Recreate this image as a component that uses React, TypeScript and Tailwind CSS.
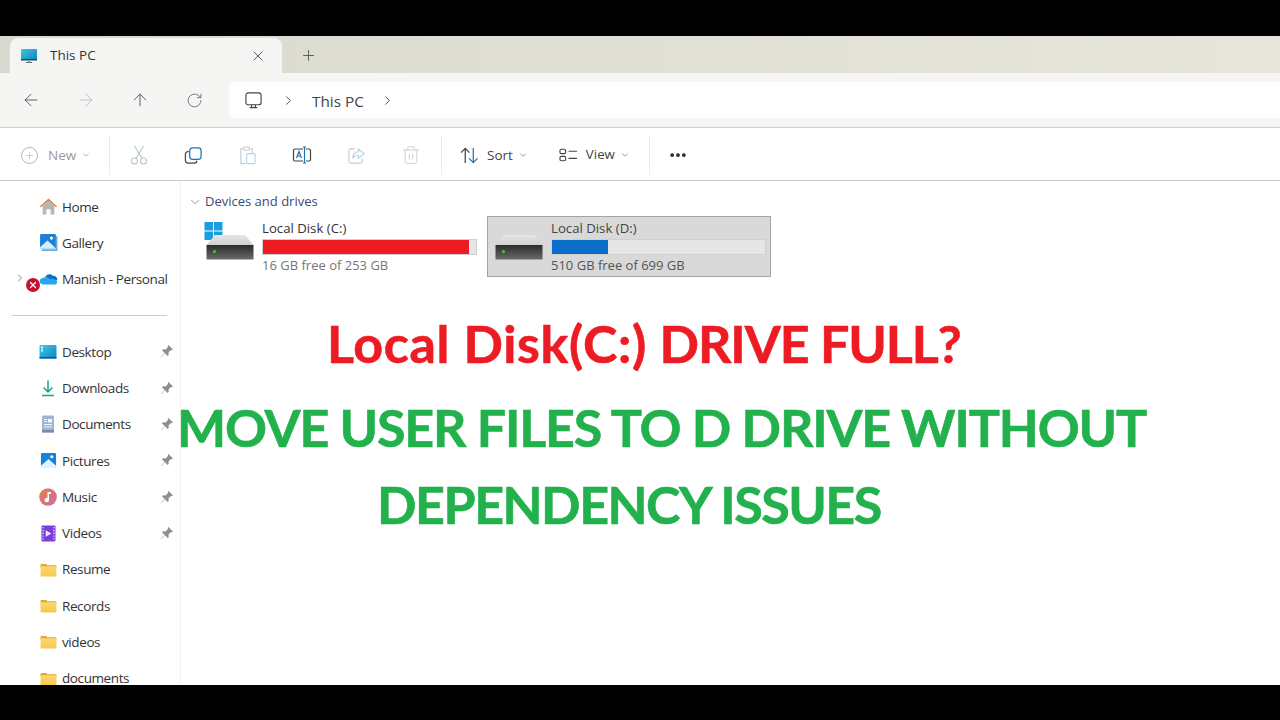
import React from "react";
import { ArrowLeft, ArrowRight, ArrowUp, RotateCw, ChevronRight, ChevronDown, Plus, X, Trash2, Ellipsis } from "lucide-react";

const Monitor = ({ className = "" }: { className?: string }) => (
  <svg viewBox="0 0 20 20" className={className} fill="none" stroke="#444" strokeWidth="1.2">
    <rect x="2" y="2" width="16" height="12.5" rx="2.5" />
    <path d="M6 17.5h8M8 14.5v3M12 14.5v3" />
  </svg>
);

const ThisPc = () => (
  <svg viewBox="0 0 18 18" className="w-[18px] h-[18px]">
    <defs>
      <linearGradient id="pc" x1="0" y1="0" x2="1" y2="1"><stop offset="0" stopColor="#3dc6e6" /><stop offset="1" stopColor="#0e86b8" /></linearGradient>
    </defs>
    <rect x="1" y="2" width="16" height="11" rx="1" fill="url(#pc)" />
    <rect x="1" y="12" width="16" height="1.5" fill="#1c4a5e" />
    <path d="M6 16h6v-1H6z" fill="#5b6b73" />
    <rect x="8" y="13.5" width="2" height="2" fill="#8b9aa2" />
  </svg>
);

const HomeIcon = () => (
  <svg viewBox="0 0 18 18" className="w-[19px] h-[19px]">
    <path d="M3.5 8.5 9 3.5l5.5 5V16.500h-3.500v-5h-4v5H3.500z" fill="#b6b6b6" />
    <path d="M0.800 9 9 1.500 17.200 9l-1 .8L9 3.500 1.800 9.800z" fill="#d9813a" />
  </svg>
);

const GalleryIcon = () => (
  <svg viewBox="0 0 18 18" className="w-[19px] h-[19px]">
    <rect x="1" y="1" width="15" height="14" rx="1.200" fill="#1d7fd6" />
    <path d="M2.500 17h15V3h-1.500v12.500H2.500z" fill="#6aa9dc" />
    <path d="M1 13.500 8 7l7 6.500V15H1z" fill="#d7ecfb" />
    <circle cx="11.800" cy="4.800" r="1.500" fill="#fff" />
  </svg>
);

const Cloud = () => (
  <svg viewBox="0 0 20 14" className="w-[19px] h-[13px]">
    <path d="M7 3.500C8.500 1 12.500.5 14.500 3c3-.500 5 1.800 5 4.500H6z" fill="#0b6fc9" />
    <path d="M4.500 12.500C2 12.500.5 10.800.5 9 .5 7 2 5.500 4.300 5.500 6 3.800 9.500 4 11 6.500c2-.800 5-.500 8 1.500 1 2-.500 4.500-2.500 4.500z" fill="#28a8ea" />
  </svg>
);

const DesktopIcon = () => (
  <svg viewBox="0 0 18 16" className="w-[18px] h-[16px]">
    <defs><linearGradient id="dk" x1="0" y1="0" x2="1" y2="1"><stop offset="0" stopColor="#43c8e8" /><stop offset="1" stopColor="#0b86c0" /></linearGradient></defs>
    <rect x="0.500" y="1" width="17" height="13.500" rx="1" fill="url(#dk)" />
    <rect x="2" y="2.500" width="2" height="2" fill="#d5f3fb" />
    <rect x="2" y="5.500" width="2" height="2" fill="#d5f3fb" />
    <rect x="0.500" y="13" width="17" height="1.500" fill="#0a5c85" />
  </svg>
);

const DownloadIcon = () => (
  <svg viewBox="0 0 18 18" className="w-[18px] h-[18px]" fill="none" stroke="#1aa58a" strokeWidth="1.500">
    <path d="M9 1.500v11M4.500 8.500 9 13l4.500-4.500M3 16.500h12" />
  </svg>
);

const DocIcon = () => (
  <svg viewBox="0 0 18 18" className="w-[18px] h-[18px]">
    <rect x="3" y="0.500" width="12" height="17" rx="1" fill="#9fb3d2" />
    <rect x="3" y="15" width="12" height="2.500" fill="#6f8ab3" />
    <path d="M9 4h4v3.500H9zM5 9h8v1H5zM5 11.500h8v1H5zM5 4h3v1H5zM5 6h3v1H5z" fill="#f3f6fa" />
  </svg>
);

const PicturesIcon = () => (
  <svg viewBox="0 0 18 18" className="w-[17px] h-[17px]">
    <rect x="1" y="1" width="16" height="16" rx="1.200" fill="#1583dd" />
    <path d="M1 14.500 9 7.500l8 7V16.500a.8.800 0 0 1-.8.500H1.800a.8.800 0 0 1-.8-.500z" fill="#e4f2fc" />
    <circle cx="12.500" cy="5" r="1.600" fill="#fff" />
  </svg>
);

const MusicIcon = () => (
  <svg viewBox="0 0 18 18" className="w-[18px] h-[18px]">
    <defs><linearGradient id="mu" x1="0" y1="0" x2="1" y2="1"><stop offset="0" stopColor="#ea7d3e" /><stop offset="1" stopColor="#c76bb0" /></linearGradient></defs>
    <circle cx="9" cy="9" r="8.800" fill="url(#mu)" />
    <path d="M8.500 4h3.500v2H10v6a2.200 2.200 0 1 1-1.500-2.100z" fill="#fff" />
  </svg>
);

const VideoIcon = () => (
  <svg viewBox="0 0 16 18" className="w-[15px] h-[17px]">
    <rect x="0.500" y="0.500" width="15" height="17" rx="1.200" fill="#7a3fd6" />
    <path d="M5 5.500v7l6-3.500z" fill="#f0e6ff" />
    <path d="M1.500 2h1.500v1.500H1.500zM1.500 5h1.500v1.500H1.500zM1.500 8h1.500v1.500H1.500zM1.500 11h1.500v1.500H1.500zM1.500 14h1.500v1.500H1.500zM13 2h1.500v1.500H13zM13 5h1.500v1.500H13zM13 8h1.500v1.500H13zM13 11h1.500v1.500H13zM13 14h1.500v1.500H13z" fill="#d8c4fa" />
  </svg>
);

const FolderIcon = () => (
  <svg viewBox="0 0 18 15" className="w-[17px] h-[14px]">
    <defs><linearGradient id="fo" x1="0" y1="0" x2="0" y2="1"><stop offset="0" stopColor="#fbd774" /><stop offset="1" stopColor="#f7c948" /></linearGradient></defs>
    <path d="M0.500 2a1 1 0 0 1 1-1h5l1.500 1.500h8.500a1 1 0 0 1 1 1V5H.500z" fill="#e3a92c" />
    <rect x="0.500" y="3.500" width="17" height="11" rx="0.800" fill="url(#fo)" />
  </svg>
);

const Pin = () => (
  <svg viewBox="0 0 14 14" className="w-[14px] h-[14px] -mt-[1px] mr-[1px]">
    <path d="M8.500 1 13 5.500l-1 .8-1-.3-2.500 2.500.2 2.500-1 1L5 9.300 1.300 13 1 12.700 4.700 9 2 6.300l1-1 2.500.2L8 3l-.3-1z" fill="#8b9094" />
  </svg>
);

const Drive = ({ win = false }: { win?: boolean }) => (
  <div className="relative w-[48px] h-[39px] mb-[12px] shrink-0">
    {win && (
      <svg viewBox="0 0 20 20" className="absolute left-[-2px] top-[1px] w-[19px] h-[18px]">
        <path d="M0 0h9.500v9.500H0zM10.500 0H20v9.500h-9.500zM0 10.500h9.500V20H0zM10.500 10.500H20V20h-9.500z" fill="#1b9de2" />
      </svg>
    )}
    <svg viewBox="0 0 48 25" className="absolute left-0 bottom-0 w-[48px] h-[25px]">
      <defs>
        <linearGradient id="dr" x1="0" y1="0" x2="0" y2="1"><stop offset="0" stopColor="#2b2b2b" /><stop offset="1" stopColor="#6b6b6b" /></linearGradient>
        <linearGradient id="dt" x1="0" y1="0" x2="0" y2="1"><stop offset="0" stopColor="#e6e6e6" /><stop offset="1" stopColor="#cfcfcf" /></linearGradient>
      </defs>
      <path d="M0.500 10 9 0h30l8.500 10z" fill="url(#dt)" />
      <rect x="0.500" y="10" width="47" height="14.500" fill="url(#dr)" />
      <circle cx="8.500" cy="16.500" r="1.500" fill="#35d04a" />
    </svg>
  </div>
);

const ToolIcon = ({ children }: { children: React.ReactNode }) => (
  <div className="w-[54.400px] flex justify-center items-center">{children}</div>
);

const NavRow = ({ icon, label, pin }: { icon: React.ReactNode; label: string; pin?: boolean }) => (
  <div className="h-[36.3px] shrink-0 flex items-center pl-[38px] pr-[5px]">
    <div className="w-[20px] flex justify-center">{icon}</div>
    <span className="ml-[4px] text-[13.500px] tracking-[-0.400px] text-[#333] flex-1 whitespace-nowrap">{label}</span>
    {pin && <Pin />}
  </div>
);

const DriveTile = ({ win, name, free, pct, color, selected }: { win?: boolean; name: string; free: string; pct: number; color: string; selected?: boolean }) => (
  <div className={`w-[284px] h-[61px] flex items-center border ${selected ? "pl-[7px] bg-[#d9d9d9] border-[#a3a3a3]" : "pl-[9px] border-transparent"}`}>
    <Drive win={win} />
    <div className="ml-[8px] w-[215px] flex flex-col">
      <span className={`text-[13.200px] leading-[19px] ${selected ? "text-[#444]" : "text-[#333]"}`}>{name}</span>
      <div className="h-[16px] bg-[#e6e6e6] border border-[#d0d0d0] my-[1px]">
        <div className="h-full" style={{ width: `${pct}%`, backgroundColor: color }} />
      </div>
      <span className={`text-[13px] leading-[19px] ${selected ? "text-[#555]" : "text-[#777]"}`}>{free}</span>
    </div>
  </div>
);

export default function App() {
  return (
    <div className="w-[1280px] h-[720px] overflow-hidden bg-black flex flex-col font-['Open_Sans','Noto_Sans',sans-serif]">
      <div className="h-[36px] shrink-0" />
      <div className="h-[649px] flex flex-col bg-white overflow-hidden">
        {/* Tab strip */}
        <div className="h-[37px] shrink-0 flex items-end pl-[10px] bg-gradient-to-r from-[#d9d9cf] to-[#e8e6da]">
          <div className="w-[272px] h-[35px] rounded-t-[8px] bg-[#f5f6f4] flex items-center pl-[10px]">
            <ThisPc />
            <span className="ml-[12px] text-[13.500px] text-[#333]">This PC</span>
            <X className="w-[16px] h-[16px] text-[#444] ml-auto mr-[16px]" strokeWidth={1.300} />
          </div>
          <div className="h-[35px] flex items-center ml-[18px]">
            <Plus className="w-[17px] h-[17px] text-[#555]" strokeWidth={1.300} />
          </div>
        </div>
        {/* Address row */}
        <div className="h-[55px] shrink-0 flex items-center bg-[#f5f6f4] border-b border-[#cfcfcf]">
          <div className="flex items-center pl-[3px]">
            <div className="w-[55px] flex justify-center"><ArrowLeft className="w-[20px] h-[20px] text-[#555]" strokeWidth={1.100} /></div>
            <div className="w-[55px] flex justify-center"><ArrowRight className="w-[20px] h-[20px] text-[#bbb]" strokeWidth={1.100} /></div>
            <div className="w-[54px] flex justify-center"><ArrowUp className="w-[20px] h-[20px] text-[#555]" strokeWidth={1.100} /></div>
            <div className="w-[55px] flex justify-center"><RotateCw className="w-[17px] h-[17px] text-[#666]" strokeWidth={1.200} /></div>
          </div>
          <div className="ml-[7px] flex-1 h-[36px] bg-white rounded-l-[6px] flex items-center pl-[15px]">
            <Monitor className="w-[19px] h-[19px]" />
            <ChevronRight className="w-[15px] h-[15px] text-[#444] ml-[18px]" strokeWidth={1.500} />
            <span className="ml-[16px] text-[15.300px] text-[#444] pt-[2px]">This PC</span>
            <ChevronRight className="w-[15px] h-[15px] text-[#444] ml-[16px]" strokeWidth={1.500} />
          </div>
        </div>
        {/* Command bar */}
        <div className="h-[53px] shrink-0 flex items-center border-b border-[#c8c8c8] pt-[2px]">
          <div className="w-[110px] h-[40px] border-r border-[#ececec] flex items-center pl-[21px] text-[#aaa]">
            <div className="w-[17px] h-[17px] rounded-full border border-[#b5b5b5] flex items-center justify-center"><Plus className="w-[11px] h-[11px]" strokeWidth={1.200} /></div>
            <span className="ml-[10px] text-[13.500px] text-[#999]">New</span>
            <ChevronDown className="w-[10px] h-[10px] ml-[5px]" />
          </div>
          <div className="w-[332px] h-[40px] border-r border-[#ececec] flex items-center pl-[2px]">
            <ToolIcon>
              <svg viewBox="0 0 18 20" className="w-[18px] h-[20px]" fill="none" stroke="#b9c5cc" strokeWidth="1.100">
                <circle cx="4.500" cy="16" r="3" />
                <circle cx="13.500" cy="16" r="3" />
                <path d="M5.800 13.500 13.500 1M12.200 13.500 4.500 1" />
              </svg>
            </ToolIcon>
            <ToolIcon>
              <svg viewBox="0 0 20 20" className="w-[19px] h-[19px]" fill="none" strokeWidth="1.300">
                <path d="M5 6H4a2.500 2.500 0 0 0-2.500 2.500V15A3 3 0 0 0 4.500 18H11a2.500 2.500 0 0 0 2.500-2.500" stroke="#444" />
                <rect x="6" y="2" width="12" height="12" rx="3" stroke="#1c74b8" />
              </svg>
            </ToolIcon>
            <ToolIcon>
              <svg viewBox="0 0 20 20" className="w-[19px] h-[19px]" fill="none" stroke="#c5cdd2" strokeWidth="1.200">
                <path d="M5 3H3v15.500h5M13 3h2v5" />
                <rect x="6" y="1" width="6" height="3.500" rx="1" />
                <rect x="9" y="8" width="9" height="10.500" rx="1.500" stroke="#b7d3e6" />
              </svg>
            </ToolIcon>
            <ToolIcon>
              <svg viewBox="0 0 20 20" className="w-[20px] h-[20px]" fill="none" strokeWidth="1.200">
                <path d="M11 4H3a1.500 1.500 0 0 0-1.500 1.500v9A1.500 1.500 0 0 0 3 16h8M14 4h3a1.500 1.500 0 0 1 1.500 1.500v9A1.500 1.500 0 0 1 17 16h-3" stroke="#444" />
                <path d="M12.500 2v16M11 2h3M11 18h3" stroke="#1c74b8" />
                <path d="M4.500 13 7 6.500 9.500 13M5.500 11h3" stroke="#1c74b8" />
              </svg>
            </ToolIcon>
            <ToolIcon><svg viewBox="0 0 20 20" className="w-[19px] h-[19px]" fill="none" stroke="#c5cdd2" strokeWidth="1.200"><path d="M8 3H4a2 2 0 0 0-2 2v11a2 2 0 0 0 2 2h10a2 2 0 0 0 2-2v-3" /><path d="M12 3l6 5-6 5v-3c-3 0-5 1-6 3 0-4 2-7 6-7z" stroke="#b7d3e6" /></svg></ToolIcon>
            <ToolIcon><Trash2 className="w-[20px] h-[20px] text-[#c5cdd2]" strokeWidth={1.100} /></ToolIcon>
          </div>
          <div className="w-[208px] h-[40px] border-r border-[#ececec] flex items-center pl-[18px]">
            <svg viewBox="0 0 20 18" className="w-[19px] h-[17px]" fill="none" strokeWidth="1.300">
              <path d="M5.500 17V1.500M1 6l4.500-4.500L10 6" stroke="#444" />
              <path d="M14 1v15.500M9.500 12l4.500 4.500L18.500 12" stroke="#1c74b8" />
            </svg>
            <span className="ml-[8px] text-[13.500px] text-[#444]">Sort</span>
            <ChevronDown className="w-[10px] h-[10px] ml-[5px] text-[#888]" />
            <svg viewBox="0 0 20 14" className="ml-[31px] w-[19px] h-[14px]" fill="none" stroke="#444" strokeWidth="1.200">
              <rect x="1" y="1" width="6" height="4.500" rx="1.500" />
              <rect x="1" y="8.500" width="6" height="4.500" rx="1.500" />
              <path d="M10 3h9M10 10.500h9" />
            </svg>
            <span className="ml-[8px] text-[13.300px] text-[#444]">View</span>
            <ChevronDown className="w-[10px] h-[10px] ml-[5px] text-[#888]" />
          </div>
          <Ellipsis className="ml-[18px] w-[20px] h-[20px] text-[#222]" strokeWidth={2.500} />
        </div>
        {/* Body */}
        <div className="flex-1 flex min-h-0">
          <div className="w-[181px] shrink-0 border-r border-[#f3f3f3] flex flex-col pt-[7.500px] overflow-hidden">
            <NavRow icon={<HomeIcon />} label="Home" />
            <NavRow icon={<GalleryIcon />} label="Gallery" />
            <div className="relative">
              <NavRow icon={<Cloud />} label="Manish - Personal" />
              <ChevronRight className="absolute left-[14px] top-[11px] w-[12px] h-[12px] text-[#666]" strokeWidth={1.500} />
              <div className="absolute left-[26px] top-[17px] w-[14px] h-[14px] rounded-full bg-[#c4122f] flex items-center justify-center">
                <X className="w-[10px] h-[10px] text-white" strokeWidth={3} />
              </div>
            </div>
            <div className="ml-[12px] mr-[13px] h-[36.300px] shrink-0 flex items-center"><div className="h-px w-full bg-[#cdcdcd]" /></div>
            <NavRow icon={<DesktopIcon />} label="Desktop" pin />
            <NavRow icon={<DownloadIcon />} label="Downloads" pin />
            <NavRow icon={<DocIcon />} label="Documents" pin />
            <NavRow icon={<PicturesIcon />} label="Pictures" pin />
            <NavRow icon={<MusicIcon />} label="Music" pin />
            <NavRow icon={<VideoIcon />} label="Videos" pin />
            <NavRow icon={<FolderIcon />} label="Resume" />
            <NavRow icon={<FolderIcon />} label="Records" />
            <NavRow icon={<FolderIcon />} label="videos" />
            <NavRow icon={<FolderIcon />} label="documents" />
          </div>
          <div className="flex-1 flex flex-col min-w-0">
            <div className="h-[39px] shrink-0 flex items-center pl-[7px] pt-[2px] text-[#3a4a78]">
              <ChevronDown className="w-[14px] h-[14px] text-[#666]" strokeWidth={1.100} />
              <span className="ml-[3px] text-[13px]">Devices and drives</span>
            </div>
            <div className="flex pl-[15px] gap-[7px] -mt-[4px]">
              <DriveTile win name="Local Disk (C:)" free="16 GB free of 253 GB" pct={96.500} color="#ed1c24" />
              <DriveTile selected name="Local Disk (D:)" free="510 GB free of 699 GB" pct={26.500} color="#0b6fc9" />
            </div>
            <div className="font-['Lato','Open_Sans',sans-serif] font-bold whitespace-nowrap [-webkit-text-stroke:0.6px_currentColor]">
              <div className="mt-[31px] ml-[146px] text-[52px] leading-[70px] text-[#ed1c24]"><span className="tracking-[0.650px]">Local Disk(C:)</span> <span className="tracking-[-1.100px]">DRIVE FULL?</span></div>
              <div className="mt-[14px] -ml-[4px] text-[52px] leading-[70px] tracking-[-1.200px] text-[#22b14c]">MOVE USER FILES TO D DRIVE WITHOUT</div>
              <div className="mt-[7px] ml-[196px] text-[52px] leading-[70px] tracking-[-1.500px] text-[#22b14c]">DEPENDENCY ISSUES</div>
            </div>
          </div>
        </div>
      </div>
    </div>
  );
}
